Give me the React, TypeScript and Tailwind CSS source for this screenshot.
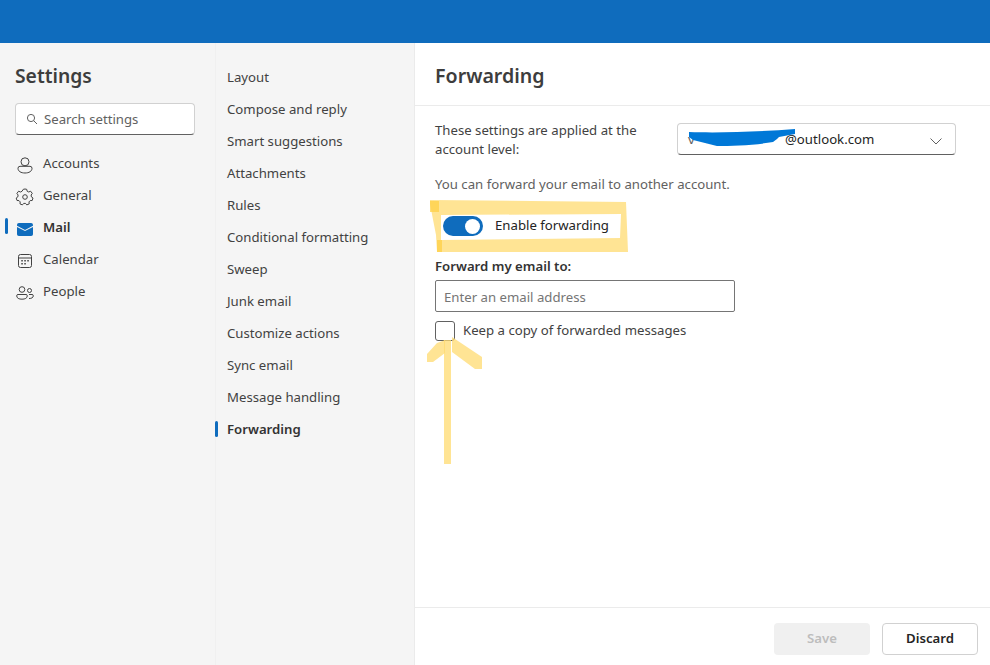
import React from "react";

const font = { fontFamily: '"Noto Sans","Open Sans",sans-serif' };

function AccountIcon() {
  return (
    <svg width="20" height="20" viewBox="0 0 20 20" fill="none" stroke="#424242" strokeWidth="1">
      <circle cx="10" cy="6.800" r="4" />
      <path d="M5 11.300h10a2 2 0 0 1 2 2c0 3-3 4.700-7 4.700s-7-1.700-7-4.700a2 2 0 0 1 2-2z" />
    </svg>
  );
}
function GearIcon() {
  return (
    <svg width="20" height="20" viewBox="0 0 20 20" fill="none" stroke="#424242" strokeWidth="1" strokeLinejoin="round">
      <circle cx="10" cy="10" r="2.300" />
      <path d="M8.300 2.300 10 2l1.700.300.500 2 1.500.700 1.900-.800 1.700 2.200-1.200 1.600.300 1.900 1.600 1.100-.800 2.500-2 .100-1.200 1.300.200 2-2.400 1-1.300-1.500h-1.800l-1.300 1.500-2.400-1 .200-2-1.200-1.300-2-.100-.800-2.500 1.600-1.100.300-1.900-1.200-1.600 1.700-2.200 1.900.800 1.500-.700z" />
    </svg>
  );
}
function MailIcon() {
  return (
    <svg width="16" height="13" viewBox="0 0 17 15" preserveAspectRatio="none">
      <path d="M0 3.200 8.500 8 17 3.200V2a2 2 0 0 0-2-2H2a2 2 0 0 0-2 2z" fill="#0f6cbd" />
      <path d="M0 4.500V13a2 2 0 0 0 2 2h13a2 2 0 0 0 2-2V4.500L8.500 9.300z" fill="#0f6cbd" />
    </svg>
  );
}
function CalendarIcon() {
  return (
    <svg width="20" height="20" viewBox="0 0 20 20" fill="none" stroke="#424242" strokeWidth="1">
      <rect x="3.500" y="3.500" width="13" height="13" rx="2" />
      <path d="M3.500 7h13" />
      <g fill="#424242" stroke="none">
        <rect x="6.300" y="9" width="1.500" height="1.500" />
        <rect x="9.300" y="9" width="1.500" height="1.500" />
        <rect x="12.300" y="9" width="1.500" height="1.500" />
        <rect x="6.300" y="12" width="1.500" height="1.500" />
        <rect x="9.300" y="12" width="1.500" height="1.500" />
      </g>
    </svg>
  );
}
function PeopleIcon() {
  return (
    <svg width="20" height="20" viewBox="0 0 20 20" fill="none" stroke="#424242" strokeWidth="1">
      <circle cx="7" cy="6.500" r="2.800" />
      <circle cx="14.500" cy="7.500" r="2" />
      <path d="M3 11.500h8a1.300 1.300 0 0 1 1.300 1.300c0 2.400-2.300 3.400-5.300 3.400s-5.300-1-5.300-3.400A1.300 1.300 0 0 1 3 11.500z" />
      <path d="M14 15.500c2.500 0 4.300-.800 4.300-2.700a1.300 1.300 0 0 0-1.300-1.300h-3" />
    </svg>
  );
}

const primary = [
  { label: "Accounts", icon: <AccountIcon /> },
  { label: "General", icon: <GearIcon /> },
  { label: "Mail", icon: <MailIcon />, active: true },
  { label: "Calendar", icon: <CalendarIcon /> },
  { label: "People", icon: <PeopleIcon /> },
];

const secondary = [
  "Layout",
  "Compose and reply",
  "Smart suggestions",
  "Attachments",
  "Rules",
  "Conditional formatting",
  "Sweep",
  "Junk email",
  "Customize actions",
  "Sync email",
  "Message handling",
  "Forwarding",
];

export default function App() {
  return (
    <div style={font} className="relative flex h-[665px] w-[990px] flex-col overflow-hidden bg-white text-[13.2px] text-[#424242]">
      <div className="h-[43px] shrink-0 bg-[#0f6cbd]" />
      <div className="flex min-h-0 flex-1">
        <aside className="w-[215px] shrink-0 bg-[#f5f5f5] pt-[19px]">
          <h1 className="pl-[15px] text-[19.3px] leading-[28px] font-semibold text-[#3d3d3d]">Settings</h1>
          <div className="mt-[13px] ml-[15px] flex h-[32px] w-[180px] items-center gap-[6px] rounded-[4px] border border-[#d1d1d1] border-b-[#616161] bg-white pl-[10px]">
            <svg width="12" height="12" viewBox="0 0 12 12" fill="none" stroke="#616161" strokeWidth="1">
              <circle cx="5" cy="5" r="3.600" />
              <path d="M7.700 7.700 11 11" />
            </svg>
            <span className="pt-[1px] text-[#616161]">Search settings</span>
          </div>
          <nav className="mt-[13px] flex flex-col">
            {primary.map((item) => (
              <div key={item.label} className="relative flex h-[32px] items-center pl-[15px]">
                {item.active && <span className="absolute top-[6px] left-[5px] h-[16px] w-[3px] rounded-[2px] bg-[#0f6cbd]" />}
                <span className="flex w-[20px] translate-y-px justify-center">{item.icon}</span>
                <span className={item.active ? "ml-[8px] font-semibold text-[#333333]" : "ml-[8px]"}>{item.label}</span>
              </div>
            ))}
          </nav>
        </aside>
        <aside className="w-[200px] shrink-0 border-r border-l border-r-[#ebebeb] border-l-[#f0f0f0] bg-[#f5f5f5] pt-[19px]">
          <nav className="flex flex-col">
            {secondary.map((label) => {
              const active = label === "Forwarding";
              return (
                <div key={label} className="relative flex h-[32px] items-center pl-[11px]">
                  {active && <span className="absolute top-[7px] left-[-1px] h-[16px] w-[3px] rounded-[2px] bg-[#0f6cbd]" />}
                  <span className={active ? "font-semibold text-[#333333]" : ""}>{label}</span>
                </div>
              );
            })}
          </nav>
        </aside>
        <main className="flex min-w-0 flex-1 flex-col">
          <div className="h-[63px] shrink-0 border-b border-[#ebebeb] pt-[19px] pl-[20px]">
            <h2 className="text-[19.6px] leading-[28px] font-semibold text-[#3d3d3d]">Forwarding</h2>
          </div>
          <div className="flex-1 pt-[15px] pl-[20px]">
            <div className="flex items-start">
              <p className="w-[242px] leading-[19px]">These settings are applied at the account level:</p>
              <div className="relative mt-[2px] flex h-[32px] w-[279px] items-center rounded-[4px] border border-[#d1d1d1] border-b-[#616161] pr-[13px] pl-[10px]">
                <span className="flex-1 pt-[2px] text-[#242424]"><span className="inline-block w-[97px] text-[#616161]">v</span>@outlook.com</span>
                <svg className="translate-y-[2px]" width="12" height="12" viewBox="0 0 12 12" fill="none" stroke="#616161" strokeWidth="1">
                  <path d="M0.500 3.500 6 9l5.500-5.500" />
                </svg>
                <svg className="absolute top-[4px] left-[9px]" width="112" height="20" viewBox="0 0 112 20">
                  <path d="M2 4C30 5 70 4 108 1L108 6 92 9 90 11 86 14C70 17 45 18 30 18L18 15 6 12 2 9z" fill="#0078d7" />
                </svg>
              </div>
            </div>
            <p className="mt-[15px] leading-[20px] text-[#616161]">You can forward your email to another account.</p>
            <label className="mt-[22px] flex h-[20px] items-center pl-[8px]">
              <span className="relative block h-[20px] w-[40px] shrink-0 rounded-full bg-[#0f6cbd]">
                <span className="absolute top-[2.5px] right-[3px] h-[15px] w-[15px] rounded-full bg-white" />
              </span>
              <span className="ml-[12px] text-[#242424]">Enable forwarding</span>
            </label>
            <p className="mt-[20px] leading-[20px] font-semibold text-[#333333]">Forward my email to:</p>
            <div className="mt-[4px] flex h-[32px] w-[300px] items-center rounded-[2px] border border-[#757575] pt-[4px] pl-[8px] text-[#757575]">Enter an email address</div>
            <label className="mt-[9px] flex h-[20px] items-center">
              <span className="block h-[20px] w-[20px] shrink-0 rounded-[3px] border border-[#616161] bg-white" />
              <span className="ml-[8px]">Keep a copy of forwarded messages</span>
            </label>
          </div>
          <div className="flex h-[58px] shrink-0 items-start justify-end gap-[12px] border-t border-[#ebebeb] pt-[15px] pr-[12px]">
            <div className="flex h-[32px] w-[96px] items-center justify-center rounded-[4px] bg-[#f0f0f0] font-semibold text-[#bdbdbd]">Save</div>
            <div className="flex h-[32px] w-[96px] items-center justify-center rounded-[4px] border border-[#d1d1d1] font-semibold text-[#242424]">Discard</div>
          </div>
        </main>
      </div>
      <svg className="pointer-events-none absolute top-0 left-0" width="990" height="665" viewBox="0 0 990 665" fill="none">
        <g fill="#ffdb70" fillOpacity="0.75">
          <path fillRule="evenodd" d="M430 200 626 202 628 252 437 252 436 235 430 204zM441 215 621 214 620 238 441 240z" />
          <path d="M430 201h9v11h-9zM437 240h5v12h-5z" fill="#ffcf40" fillOpacity="0.7" />
          <path d="M444 340h7v124h-7z" />
          <path d="M427 354 437 343 445 340 445 353 433 362H427zM452 337 482 357V369H475L452 352z" />
        </g>
      </svg>
    </div>
  );
}
